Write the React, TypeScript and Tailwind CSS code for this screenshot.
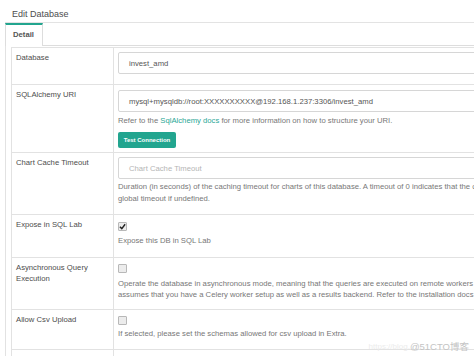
import React from 'react';

const Checkbox = ({ checked }: { checked?: boolean }) => (
    <span className="flex h-[9px] w-[9px] items-center justify-center rounded-[1px] border border-[#b8b8b8] bg-[#ececec]">
        {checked && (
            <svg width="7" height="7" viewBox="0 0 8 8">
                <path d="M1 4.2 L3.2 6.4 L7 1.4" fill="none" stroke="#222" strokeWidth="1.6" />
            </svg>
        )}
    </span>
);

const Row: React.FC<{ label: React.ReactNode; children: React.ReactNode; className?: string }> = ({ label, children, className }) => (
    <div className="grid grid-cols-[102px_1fr] border-b border-[#e2e2e2]">
        <div className="border-r border-[#e2e2e2] pl-[4px] pt-[4px] pr-2 text-[#4d4d4d]">{label}</div>
        <div className={`pl-[4px] ${className ?? ''}`}>{children}</div>
    </div>
);

const inputCls = 'h-[22px] w-[420px] rounded-[2px] border border-[#d6d6d6] pl-[10px] flex items-center text-[#555] whitespace-nowrap';

export default function App() {
    return (
        <div className="relative h-[356px] w-[474px] overflow-hidden bg-white font-['Liberation_Sans',Arial,sans-serif] text-[7.7px] leading-[11px]">
            <div className="ml-[5px]">
                {/* Panel heading */}
                <div className="h-[23px] border-b border-[#e3e3e3] pl-[7px] pt-[9px] text-[9px] leading-[11px] text-[#4d4d4d]">Edit Database</div>

                {/* Tabs */}
                <div className="flex h-[23px]">
                    <div className="w-[38px] border-x border-t-2 border-[#dddddd] border-t-[#22a58f] pl-[7px] pt-[4px] font-bold text-[#555]">Detail</div>
                    <div className="flex-1 border-b border-[#dddddd]" />
                </div>

                {/* Tab content */}
                <div className="border-l border-[#e2e2e2] pl-[5px] pt-[1px]">
                    <div className="border-l border-t border-[#e2e2e2]">
                        <Row label="Database" className="pt-[4px] pb-[10px]">
                            <div className={inputCls}>invest_amd</div>
                        </Row>

                        <Row label="SQLAlchemy URI" className="pt-[5px] pb-[4px]">
                            <div className={inputCls}>mysql+mysqldb://root:XXXXXXXXXX@192.168.1.237:3306/invest_amd</div>
                            <p className="mt-[3px] whitespace-nowrap text-[#777]">
                                Refer to the <span className="text-[#2ba796]">SqlAlchemy docs</span> for more information on how to structure your URI.
                            </p>
                            <button className="mt-[6px] h-[16px] w-[58px] rounded-[2px] bg-[#22a58f] text-[6px] font-bold text-white">Test Connection</button>
                        </Row>

                        <Row label="Chart Cache Timeout" className="pt-[4px] pb-[9px]">
                            <div className={`${inputCls} text-[#b5b5b5]`}>Chart Cache Timeout</div>
                            <p className="mt-[2px] whitespace-nowrap leading-[12px] text-[#777]">
                                Duration (in seconds) of the caching timeout for charts of this database. A timeout of 0 indicates that the cache never expires. Note this defaults to the
                                <br />
                                global timeout if undefined.
                            </p>
                        </Row>

                        <Row label="Expose in SQL Lab" className="pt-[7px] pb-[11px]">
                            <Checkbox checked />
                            <p className="mt-[4px] whitespace-nowrap text-[#777]">Expose this DB in SQL Lab</p>
                        </Row>

                        <Row label={<>Asynchronous Query<br />Execution</>} className="pt-[6px] pb-[9px]">
                            <Checkbox />
                            <p className="mt-[5px] whitespace-nowrap text-[#777]">
                                Operate the database in asynchronous mode, meaning that the queries are executed on remote workers as opposed to on the web server itself. This
                                <br />
                                assumes that you have a Celery worker setup as well as a results backend. Refer to the installation docs for more information.
                            </p>
                        </Row>

                        <Row label="Allow Csv Upload" className="pt-[6px] pb-[10px]">
                            <Checkbox />
                            <p className="mt-[3px] whitespace-nowrap text-[#777]">If selected, please set the schemas allowed for csv upload in Extra.</p>
                        </Row>

                        <Row label="Extra" className="pt-[6px] h-[40px]">
                            <div className={inputCls}>&nbsp;</div>
                        </Row>
                    </div>
                </div>
            </div>

            {/* Watermark */}
            <div className="absolute bottom-[4px] right-[5px] flex items-center whitespace-nowrap font-['Liberation_Sans','Noto_Sans_CJK_SC',sans-serif]">
                <span className="text-[8px] text-[#ececec]">https://blog.</span>
                <span className="text-[9.5px] text-[#c4c4c4]">@51CTO博客</span>
            </div>
        </div>
    );
}
